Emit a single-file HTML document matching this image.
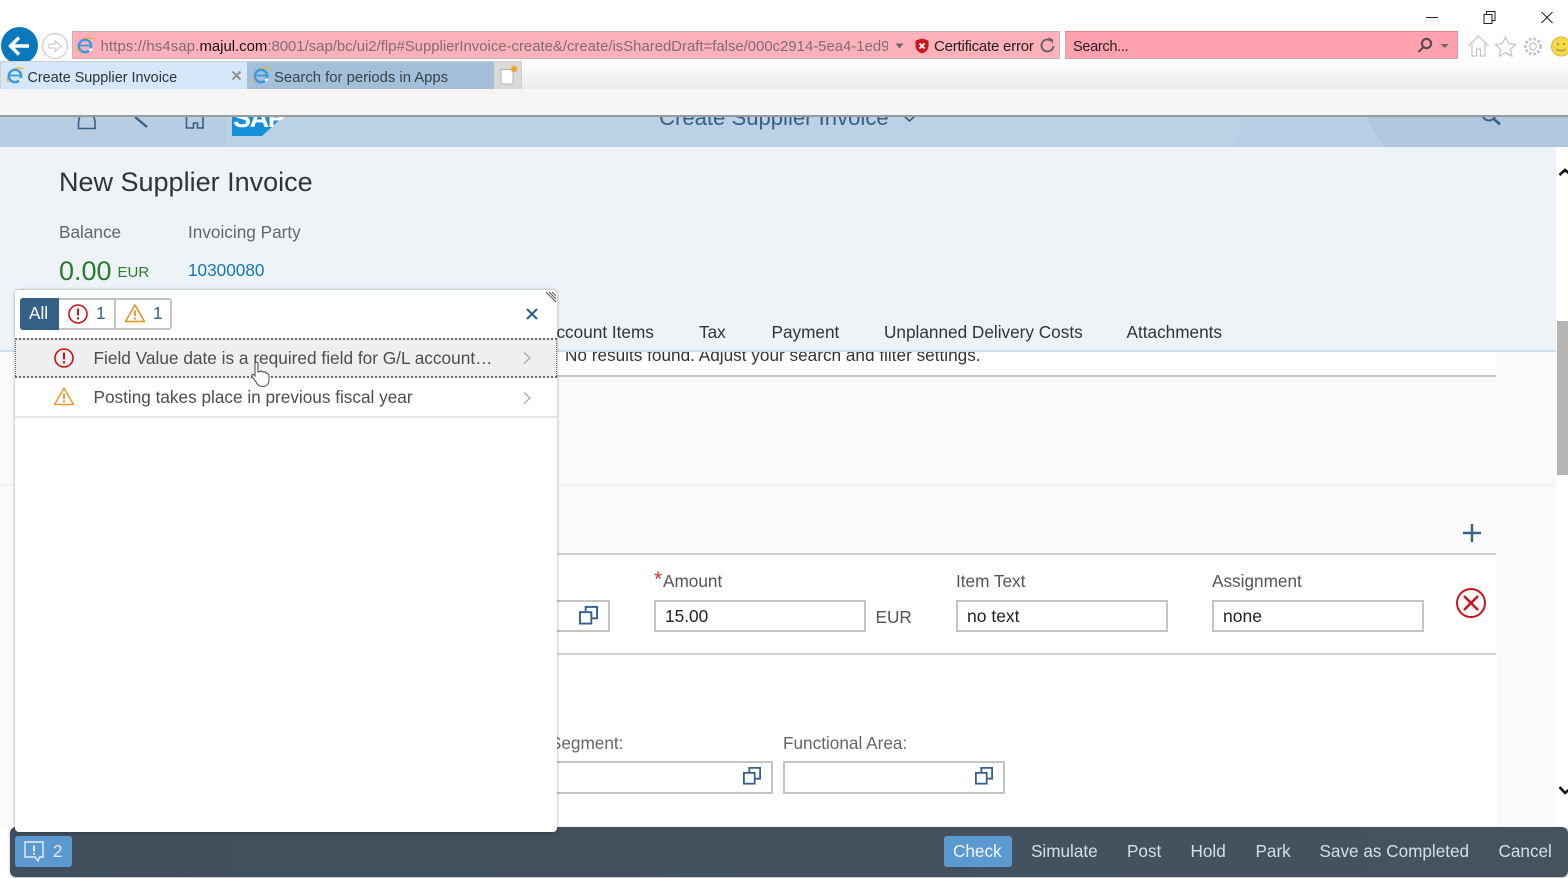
<!DOCTYPE html>
<html lang="en"><head><meta charset="utf-8"><title>Create Supplier Invoice</title>
<style>
html,body{margin:0;padding:0;width:1568px;height:878px;overflow:hidden;background:#fff;font-family:"Liberation Sans",sans-serif}
div,span.t,svg{position:absolute}
.t{position:absolute;white-space:nowrap;line-height:20px;height:20px}
.lb{color:#666;font-size:17.2px}
.tab{color:#333;font-size:17.2px;top:321.5px}
.in{background:#fff;border:2px solid #c4c4c4;box-sizing:border-box}
.ab{color:#d5dfe8;font-size:17.15px;top:841.4px}
.ie{width:18px;height:18px}
</style></head><body>
<svg width="0" height="0" style="position:absolute"><defs>
<symbol id="ie" viewBox="0 0 18 18"><path d="M2.5 15C0 12 3 5 8 2.5 12 .8 16.5 .3 17 2.5" fill="none" stroke="#f0b429" stroke-width="1.5"/><circle cx="9" cy="9" r="6.2" fill="none" stroke="#3b9ade" stroke-width="2.4"/><path d="M4 8.5H15" stroke="#3b9ade" stroke-width="1.8"/><path d="M13 13.5L16 12" stroke="#f5f7fa" stroke-width="2.4"/></symbol>
<symbol id="vh" viewBox="0 0 20 20"><rect x="1" y="6.5" width="12" height="12" fill="none" stroke="#346187" stroke-width="2"/><path d="M7 5.5V1H19V13H14" fill="none" stroke="#346187" stroke-width="2"/></symbol>
</defs></svg>

<!-- browser chrome -->
<div style="left:0;top:0;width:1568px;height:90px;background:linear-gradient(#fff 0,#fff 60px,#ececec 88px)"></div>
<svg style="left:1420px;top:8px" width="140" height="20" fill="none" stroke="#222" stroke-width="1"><path d="M6 9.5H18"/><path d="M64 6.5H72V15.5H64ZM66.5 6.5V3.5H75V12.5H72"/><path d="M121.5 4L132.5 15M132.5 4L121.5 15"/></svg>
<div style="left:1px;top:26.5px;width:37px;height:37px;border-radius:50%;background:#0b78bd"></div>
<svg style="left:1px;top:26.5px" width="38" height="38" fill="none" stroke="#fff" stroke-width="3.4"><path d="M28 19H10M18 10.5L9.5 19L18 27.5"/></svg>
<svg style="left:41px;top:32px" width="28" height="28" fill="none"><circle cx="14" cy="14" r="12.5" stroke="#cfcfcf" stroke-width="1.3"/><path d="M8 12H14V8.5L20 14L14 19.5V16H8Z" stroke="#c4c4c4"/></svg>
<div style="left:72px;top:31px;width:988px;height:28px;box-sizing:border-box;background:#ffb1bb;border:1px solid #c8b2b6"></div>
<svg class="ie" style="left:76px;top:37px"><use href="#ie"/></svg>
<span class="t" style="left:100.5px;top:36.6px;font-size:14.9px;color:#7b6f72"><span style="letter-spacing:.14px">https://hs4sap.</span><span style="color:#111">majul.com</span>:8001/sap/bc/ui2/flp#SupplierInvoice-create&amp;/create/isSharedDraft=false/000c2914-5ea4-1ed9</span>
<div style="left:888px;top:32px;width:170px;height:26px;background:#ffb1bb"></div>
<svg style="left:895px;top:43px" width="10" height="6"><path d="M0.5 0.5H8.5L4.5 5.5Z" fill="#6d6265"/></svg>
<svg style="left:914px;top:38px" width="16" height="16"><path d="M8 0.5L14.5 2.5V8C14.5 12 11 14.5 8 15.5 5 14.5 1.5 12 1.5 8V2.5Z" fill="#c9171e"/><path d="M5.5 5.5L10.5 10.5M10.5 5.5L5.5 10.5" stroke="#fff" stroke-width="1.8"/></svg>
<span class="t" style="left:934px;top:36.6px;font-size:15px;color:#222;letter-spacing:-.22px">Certificate error</span>
<svg style="left:1039px;top:36px" width="17" height="18" fill="none" stroke="#6a6265" stroke-width="2"><path d="M12.5 5A6 6 0 1 0 14.5 10"/><path d="M9 1L14 3.5V7.5Z" fill="#6a6265" stroke="none"/></svg>
<div style="left:1065px;top:31px;width:393px;height:28px;box-sizing:border-box;background:#ffa1ae;border:1px solid #c5a4ab;border-top-color:#ef8090"></div>
<span class="t" style="left:1073px;top:36.6px;font-size:14.6px;color:#2a2226;letter-spacing:-.35px">Search...</span>
<svg style="left:1416px;top:37px" width="38" height="18" fill="none" stroke="#5b4f53" stroke-width="2.2"><circle cx="10.5" cy="6.5" r="4.6"/><path d="M7 10.5L2.5 15"/><path d="M24.5 7H33L28.7 11Z" fill="#6d6265" stroke="none"/></svg>
<svg style="left:1467px;top:34px" width="101" height="24" fill="none" stroke="#c3c3c3" stroke-width="1.2"><path d="M1.5 12L11.5 2L21.5 12M5 9.5V22H9.5V15H13.5V22H18V9.5"/><path d="M38.5 3L41.6 9.6L48.8 10.4L43.4 15.2L44.9 22.2L38.5 18.6L32.1 22.2L33.6 15.2L28.2 10.4L35.4 9.6Z"/><circle cx="66" cy="12.5" r="3.4"/><circle cx="66" cy="12.5" r="7.6" stroke-width="3" stroke-dasharray="2.6 1.9"/><circle cx="94" cy="12.5" r="9.5" fill="#f5d94d" stroke="#e0bd40"/><circle cx="91" cy="10" r="1" fill="#a08a20" stroke="none"/><circle cx="97" cy="10" r="1" fill="#a08a20" stroke="none"/><path d="M89.5 15C92 17.5 96 17.5 98.5 15" stroke="#a08a20"/></svg>

<!-- tabs -->
<div style="left:0;top:61px;width:522px;height:28px;background:#cfcfcf"></div>
<div style="left:1px;top:62px;width:246px;height:27px;background:#d5e8fa"></div>
<div style="left:247px;top:62px;width:247px;height:27px;background:#a3bfd9"></div>
<div style="left:494px;top:62px;width:27px;height:27px;background:#d9d9d9"></div>
<svg class="ie" style="left:6px;top:67px"><use href="#ie"/></svg>
<span class="t" style="left:27.5px;top:67.5px;font-size:14.4px;color:#2e3134">Create Supplier Invoice</span>
<svg style="left:230px;top:70px" width="14" height="12"><path d="M2.5 1.5L10.5 9.5M10.5 1.5L2.5 9.5" stroke="#8c9198" stroke-width="2"/></svg>
<svg class="ie" style="left:252px;top:67px"><use href="#ie"/></svg>
<span class="t" style="left:274px;top:67.5px;font-size:14.85px;color:#3a4148">Search for periods in Apps</span>
<svg style="left:498px;top:65px" width="22" height="22"><path d="M3 4.5H15V19H3Z" fill="#fff" stroke="#b5b5b5"/><circle cx="16" cy="4" r="3.2" fill="#f5a623"/></svg>
<div style="left:0;top:89px;width:1568px;height:27px;background:#f6f6f6"></div>
<div style="left:0;top:115px;width:1568px;height:2px;background:#9b9b9b"></div>

<!-- SAP shell header -->
<div style="left:0;top:117px;width:1568px;height:30px;background:#bdd1e6;overflow:hidden">
<div style="left:1235px;top:0;width:333px;height:30px;background:#b9cde4;clip-path:polygon(9px 0,333px 0,333px 30px,0 30px)"></div>
<div style="left:1366px;top:0;width:202px;height:30px;background:#b1c7df;clip-path:polygon(0 0,202px 0,202px 30px,18px 30px)"></div>
<div style="left:0;top:0;width:226px;height:30px;background:#b8cde3"></div>
<svg style="left:70px;top:-8px" width="140" height="30" fill="none" stroke="#376088" stroke-width="1.6"><path d="M10.5 6C9 9 8.5 11 8.5 14V19.5H25V14C25 11 24.5 9 23 6"/><path d="M65 8L77 18" stroke-width="2.4"/><path d="M116.5 6V19H123.5V14H127.5V19H133V6"/></svg>
<svg style="left:232px;top:-2px" width="54" height="24"><path d="M0 0H53L30 21H0Z" fill="#1490d8"/></svg>
<span class="t" style="left:233px;top:-11px;font-size:27px;font-weight:bold;color:#fff;line-height:24px;height:24px;letter-spacing:-1.4px">SAP</span>
<span class="t" style="left:659px;top:-11px;font-size:22.1px;color:#346187;line-height:24px;height:24px">Create Supplier Invoice</span>
<svg style="left:902px;top:-3px" width="15" height="10" fill="none" stroke="#346187" stroke-width="1.6"><path d="M1.5 1.5L7.5 7L13.5 1.5"/></svg>
<svg style="left:1480px;top:-6px" width="24" height="18" fill="none" stroke="#346187" stroke-width="2"><circle cx="9" cy="3" r="6.5"/><path d="M14 8L20 13.5" stroke-width="2.6"/></svg>
</div>

<!-- object header -->
<div style="left:0;top:147px;width:1556px;height:203px;background:#eef3f8"></div>
<div style="left:0;top:350px;width:1556px;height:2px;background:#cfe0f0"></div>
<span class="t" style="left:59px;top:166px;font-size:27px;color:#333;line-height:32px;height:32px">New Supplier Invoice</span>
<span class="t lb" style="left:59px;top:221.5px;color:#666">Balance</span>
<span class="t lb" style="left:188px;top:221.5px;color:#666">Invoicing Party</span>
<span class="t" style="left:59px;top:256px;font-size:27px;color:#2b7c2b;line-height:30px;height:30px">0.00</span>
<span class="t" style="left:117.5px;top:262.6px;font-size:15px;color:#2b7c2b">EUR</span>
<span class="t" style="left:188px;top:259.5px;font-size:17.2px;color:#1676b6">10300080</span>
<span class="t tab" style="left:545px">Account Items</span>
<span class="t tab" style="left:699px">Tax</span>
<span class="t tab" style="left:771.5px">Payment</span>
<span class="t tab" style="left:884px">Unplanned Delivery Costs</span>
<span class="t tab" style="left:1126.5px">Attachments</span>

<!-- content -->
<div style="left:0;top:352px;width:1556px;height:476px;background:#fafafa"></div>
<div style="left:545px;top:352px;width:951px;height:23px;background:#fff;overflow:hidden"><span class="t" style="left:20px;top:-6.6px;font-size:17.2px;color:#333">No results found. Adjust your search and filter settings.</span></div>
<div style="left:545px;top:375px;width:951px;height:2px;background:#c8c8c8"></div>
<div style="left:0;top:484px;width:1556px;height:2px;background:#f2f2f2"></div>
<svg style="left:1462px;top:523px" width="20" height="20"><path d="M1 10H19M10 1V19" stroke="#346187" stroke-width="2.4"/></svg>
<div style="left:545px;top:553px;width:951px;height:102px;background:#fff;border-top:2px solid #cfcfcf;border-bottom:2px solid #d5d5d5;box-sizing:border-box"></div>
<div style="left:545px;top:655px;width:952px;height:173px;background:#fff"></div>
<div class="in" style="left:500px;top:600px;width:109.5px;height:32px"></div>
<svg style="left:579px;top:606px" width="19" height="19"><use href="#vh"/></svg>
<span class="t" style="left:654px;top:570px;font-size:21px;color:#c9302c">*</span>
<span class="t lb" style="left:663px;top:571px;color:#555">Amount</span>
<div class="in" style="left:654px;top:600px;width:212px;height:32px"></div>
<span class="t" style="left:665px;top:606px;font-size:17.3px;color:#222">15.00</span>
<span class="t" style="left:875.5px;top:607px;font-size:17.2px;color:#555">EUR</span>
<span class="t lb" style="left:956px;top:571px;color:#555">Item Text</span>
<div class="in" style="left:956px;top:600px;width:212px;height:32px"></div>
<span class="t" style="left:967px;top:606px;font-size:17.5px;color:#222">no text</span>
<span class="t lb" style="left:1212px;top:571px;color:#555">Assignment</span>
<div class="in" style="left:1212px;top:600px;width:212px;height:32px"></div>
<span class="t" style="left:1223px;top:606px;font-size:17.5px;color:#222">none</span>
<svg style="left:1456px;top:588px" width="30" height="30" fill="none" stroke="#c9141b"><circle cx="15" cy="15" r="14" stroke-width="2"/><path d="M8 8L22 22M22 8L8 22" stroke-width="2.6"/></svg>
<span class="t" style="left:505px;top:733px;font-size:17.2px;color:#666">Profit Segment:</span>
<div class="in" style="left:500px;top:761px;width:273px;height:33px"></div>
<svg style="left:743px;top:767px" width="18" height="18"><use href="#vh"/></svg>
<span class="t" style="left:783px;top:733px;font-size:17.2px;color:#666">Functional Area:</span>
<div class="in" style="left:783px;top:761px;width:222px;height:33px"></div>
<svg style="left:975px;top:767px" width="18" height="18"><use href="#vh"/></svg>

<!-- scrollbar -->
<div style="left:1556px;top:147px;width:12px;height:681px;background:#fff"></div>
<div style="left:1557px;top:321px;width:11px;height:154px;background:#b5b5b5"></div>
<svg style="left:1558px;top:166px" width="10" height="14" fill="none" stroke="#111" stroke-width="2.6"><path d="M1.5 9L7 4L12 8"/></svg>
<svg style="left:1558px;top:784px" width="10" height="14" fill="none" stroke="#111" stroke-width="2.6"><path d="M1.5 3L7 9L12 5"/></svg>

<!-- footer -->
<div style="left:10px;top:827px;width:1558px;height:50px;background:linear-gradient(90deg,#414e5b,#46535f);border-radius:6px;box-shadow:0 1px 2px rgba(0,0,0,.3)"></div>
<div style="left:15px;top:836px;width:57px;height:31px;background:#5a9ad0;border-radius:3px"></div>
<svg style="left:23px;top:840px" width="24" height="24" fill="none" stroke="#e8eef4" stroke-width="1.4"><path d="M2 2H20V17H16.5L15 21L12 17H2Z"/><path d="M11 5.5V11.5M11 13V14.8" stroke-width="1.8"/></svg>
<span class="t ab" style="left:53px;color:#dfe7ee">2</span>
<div style="left:944px;top:836px;width:68px;height:31px;background:#5a9ad0;border-radius:3px"></div>
<span class="t ab" style="left:953px;color:#f0f5fa">Check</span>
<span class="t ab" style="left:1031px">Simulate</span>
<span class="t ab" style="left:1127px">Post</span>
<span class="t ab" style="left:1190.5px">Hold</span>
<span class="t ab" style="left:1255.5px">Park</span>
<span class="t ab" style="left:1319.5px">Save as Completed</span>
<span class="t ab" style="left:1498.5px">Cancel</span>

<!-- message popover -->
<div style="left:15px;top:290px;width:542px;height:542px;background:#fff;border-radius:4px;box-shadow:0 0 3px rgba(0,0,0,.35)"></div>
<svg style="left:545px;top:291px" width="12" height="12" stroke="#555"><path d="M1 1L11 11M4 1L11 8M7 1L11 5"/></svg>
<div style="left:20px;top:298px;width:152px;height:32px;box-sizing:border-box;background:#fff;border:2px solid #c4c4c4;border-radius:3px"></div>
<div style="left:20px;top:298px;width:39px;height:32px;background:#346187;border-radius:3px 0 0 3px"></div>
<div style="left:114px;top:299px;width:2px;height:30px;background:#c4c4c4"></div>
<span class="t" style="left:29px;top:303.4px;font-size:17.2px;color:#fff">All</span>
<svg style="left:67px;top:303px" width="22" height="22" fill="none"><circle cx="11" cy="11" r="9" stroke="#c9141b" stroke-width="1.6"/><path d="M11 5.5V12.5M11 14.2V16.5" stroke="#c9141b" stroke-width="2"/></svg>
<span class="t" style="left:96px;top:303.4px;font-size:17.2px;color:#346187">1</span>
<svg style="left:124px;top:303px" width="22" height="20" fill="none"><path d="M11 2L20.5 18.5H1.5Z" stroke="#ea8a1f" stroke-width="1.5" stroke-linejoin="round"/><path d="M11 7.5V13M11 14.5V16.5" stroke="#ea8a1f" stroke-width="1.8"/></svg>
<span class="t" style="left:153px;top:303.4px;font-size:17.2px;color:#346187">1</span>
<svg style="left:525px;top:307px" width="14" height="14"><path d="M2 2L12 12M12 2L2 12" stroke="#346187" stroke-width="2.2"/></svg>
<div style="left:15px;top:338px;width:542px;height:40px;box-sizing:border-box;background:#efefef;border-top:2px dotted #666;border-bottom:2px dotted #666;border-left:1px dotted #666;border-right:1px dotted #666"></div>
<svg style="left:53px;top:347px" width="22" height="22" fill="none"><circle cx="11" cy="11" r="9" stroke="#c9141b" stroke-width="1.6"/><path d="M11 5.5V12.5M11 14.2V16.5" stroke="#c9141b" stroke-width="2"/></svg>
<span class="t" style="left:93.5px;top:348px;font-size:17.25px;color:#4d4d4d">Field Value date is a required field for G/L account…</span>
<svg style="left:522px;top:351px" width="10" height="14" fill="none" stroke="#aaa" stroke-width="1.3"><path d="M2 1.5L8 7L2 12.5"/></svg>
<svg style="left:53px;top:386px" width="22" height="21" fill="none"><path d="M11 2L20.5 18.5H1.5Z" stroke="#ea9a2a" stroke-width="1.5" stroke-linejoin="round"/><path d="M11 7.5V13M11 14.5V16.5" stroke="#ea8a1f" stroke-width="1.8"/></svg>
<span class="t" style="left:93.5px;top:387.4px;font-size:17.2px;color:#4d4d4d">Posting takes place in previous fiscal year</span>
<svg style="left:522px;top:391px" width="10" height="14" fill="none" stroke="#aaa" stroke-width="1.3"><path d="M2 1.5L8 7L2 12.5"/></svg>
<div style="left:15px;top:416px;width:542px;height:2px;background:#e5e5e5"></div>
<svg style="left:249px;top:361px" width="22" height="28"><path d="M6 2.5C6 .8 9 .8 9 2.5V11L11 10.5C12 9.5 13.5 10 13.5 11L15 11C16 10.5 17 11 17 12L18 12.5C19 12.5 20 13.5 20 15V19C20 22 18.5 25.5 14 25.5 10 25.5 8.5 24 7 21L3 15.5C2 14 3.5 12.5 5 14L6 15Z" fill="#fff" stroke="#444" stroke-width="1"/></svg>
</body></html>
